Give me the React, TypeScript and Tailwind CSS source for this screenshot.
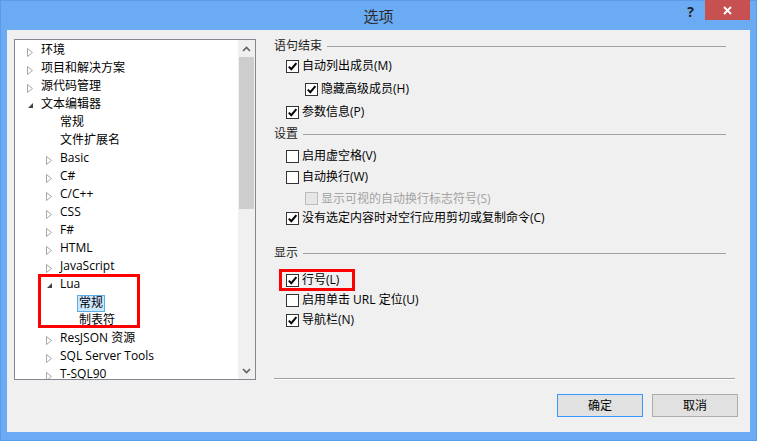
import React from 'react';

interface TreeRow {
  label: string;
  level: 0 | 1 | 2;
  arrow?: 'closed' | 'open';
  selected?: boolean;
}

interface Option {
  label: string;
  checked?: boolean;
  disabled?: boolean;
  indent?: boolean;
}

const levelPad = { 0: 'pl-[12px]', 1: 'pl-[31px]', 2: 'pl-[50px]' };

const topRows: TreeRow[] = [
  { label: '环境', level: 0, arrow: 'closed' },
  { label: '项目和解决方案', level: 0, arrow: 'closed' },
  { label: '源代码管理', level: 0, arrow: 'closed' },
  { label: '文本编辑器', level: 0, arrow: 'open' },
  { label: '常规', level: 1 },
  { label: '文件扩展名', level: 1 },
  { label: 'Basic', level: 1, arrow: 'closed' },
  { label: 'C#', level: 1, arrow: 'closed' },
  { label: 'C/C++', level: 1, arrow: 'closed' },
  { label: 'CSS', level: 1, arrow: 'closed' },
  { label: 'F#', level: 1, arrow: 'closed' },
  { label: 'HTML', level: 1, arrow: 'closed' },
  { label: 'JavaScript', level: 1, arrow: 'closed' },
];

const luaRows: TreeRow[] = [
  { label: 'Lua', level: 1, arrow: 'open' },
  { label: '常规', level: 2, selected: true },
  { label: '制表符', level: 2 },
];

const bottomRows: TreeRow[] = [
  { label: 'ResJSON 资源', level: 1, arrow: 'closed' },
  { label: 'SQL Server Tools', level: 1, arrow: 'closed' },
  { label: 'T-SQL90', level: 1, arrow: 'closed' },
];

const Row: React.FC<{ row: TreeRow }> = ({ row }) => (
  <div className={`flex h-[18px] shrink-0 items-center ${levelPad[row.level]}`}>
    <span className="flex w-[14px] shrink-0 items-center pt-[4px]">
      {row.arrow === 'closed' && (
        <svg width="6" height="9" viewBox="0 0 6 9">
          <polygon points="0.5,0.5 5.5,4.5 0.5,8.5" fill="#fff" stroke="#a6a6a6" strokeWidth="1" />
        </svg>
      )}
      {row.arrow === 'open' && (
        <svg width="6" height="6" viewBox="0 0 6 6" className="ml-[1px]">
          <polygon points="5,0 5,5 0,5" fill="#404040" />
        </svg>
      )}
    </span>
    {row.selected ? (
      <span className="-ml-[2px] mt-[2px] flex h-[17px] items-center border border-[#5aaee6] bg-[#cce8ff] px-[1px]">
        {row.label}
      </span>
    ) : (
      <span className="whitespace-nowrap">{row.label}</span>
    )}
  </div>
);

const Box: React.FC<{ checked?: boolean; disabled?: boolean }> = ({ checked, disabled }) => (
  <span
    className={`flex h-[13px] w-[13px] shrink-0 items-center justify-center border ${
      disabled ? 'border-[#bcbcbc] bg-[#e6e6e6]' : 'border-[#333333] bg-white'
    }`}
  >
    {checked && (
      <svg width="11" height="11" viewBox="0 0 11 11">
        <path d="M1.8 5.6 L4.3 8.2 L9.4 2.2" fill="none" stroke="#000" strokeWidth="2" />
      </svg>
    )}
  </span>
);

const Check: React.FC<{ opt: Option; className: string }> = ({ opt, className }) => (
  <div className={`flex items-center gap-[3px] ${opt.indent ? 'pl-[31px]' : 'pl-[12px]'} ${className}`}>
    <Box checked={opt.checked} disabled={opt.disabled} />
    <span className={`whitespace-nowrap ${opt.disabled ? 'text-[#a3a3a3]' : 'text-black'}`}>{opt.label}</span>
  </div>
);

const Header: React.FC<{ title: string; className: string }> = ({ title, className }) => (
  <div className={`flex items-center gap-[5px] text-[#1e1e1e] ${className}`}>
    <span>{title}</span>
    <div className="h-px flex-1 bg-[#a0a0a0]" />
  </div>
);

const App: React.FC = () => {
  return (
    <div className="flex h-[441px] w-[757px] flex-col border border-[#5b9ae6] bg-[#6aabf4] font-['Open_Sans','Noto_Sans_CJK_SC',sans-serif] text-[12px] select-none">
      <div className="grid h-[29px] shrink-0 grid-cols-[1fr_auto_1fr]">
        <div />
        <div className="pt-[6px] text-[15px] leading-[18px] text-[#2a2a2a]">选项</div>
        <div className="flex items-start justify-end">
          <span className="mr-[11px] mt-[3px] text-[14px] font-bold leading-[16px] text-[#222]">?</span>
          <div className="-mt-px mr-[6px] flex h-[20px] w-[45px] items-center justify-center bg-[#c75050]">
            <svg width="9" height="9" viewBox="0 0 9 9">
              <path d="M1 1 L8 8 M8 1 L1 8" stroke="#fff" strokeWidth="1.8" />
            </svg>
          </div>
        </div>
      </div>

      <div className="mx-[6px] mb-[8px] flex flex-1 bg-[#f0f0f0]">
        {/* tree */}
        <div className="ml-[7px] mt-[9px] flex h-[341px] w-[242px] shrink-0 border border-[#828790] bg-white">
          <div className="flex flex-1 flex-col overflow-hidden pt-[1px] leading-[18px] text-black">
            {topRows.map((r, i) => (
              <Row key={i} row={r} />
            ))}
            <div className="relative">
              {luaRows.map((r, i) => (
                <Row key={i} row={r} />
              ))}
              <div className="absolute left-[23px] -top-[1px] h-[54px] w-[102px] border-[3px] border-[#ff0000]" />
            </div>
            {bottomRows.map((r, i) => (
              <Row key={i} row={r} />
            ))}
          </div>
          <div className="flex w-[17px] shrink-0 flex-col bg-[#f0f0f0]">
            <div className="flex h-[17px] items-center justify-center">
              <svg width="9" height="6" viewBox="0 0 9 6">
                <path d="M1 5 L4.5 1.5 L8 5" fill="none" stroke="#606060" strokeWidth="1.6" />
              </svg>
            </div>
            <div className="mx-[1px] h-[152px] bg-[#cdcdcd]" />
            <div className="flex-1" />
            <div className="flex h-[17px] items-center justify-center">
              <svg width="9" height="6" viewBox="0 0 9 6">
                <path d="M1 1 L4.5 4.5 L8 1" fill="none" stroke="#606060" strokeWidth="1.6" />
              </svg>
            </div>
          </div>
        </div>

        {/* options */}
        <div className="ml-[18px] flex flex-1 flex-col pr-[12px] pt-[6px]">
          <div className="mr-[12px] flex flex-col">
            <Header title="语句结束" className="h-[20px]" />
            <Check opt={{ label: '自动列出成员(M)', checked: true }} className="h-[20px]" />
            <Check opt={{ label: '隐藏高级成员(H)', checked: true, indent: true }} className="h-[26px]" />
            <Check opt={{ label: '参数信息(P)', checked: true }} className="h-[20px]" />
            <Header title="设置" className="h-[24px]" />
            <Check opt={{ label: '启用虚空格(V)' }} className="h-[20px]" />
            <Check opt={{ label: '自动换行(W)' }} className="h-[22px]" />
            <Check opt={{ label: '显示可视的自动换行标志符号(S)', disabled: true, indent: true }} className="h-[21px]" />
            <Check opt={{ label: '没有选定内容时对空行应用剪切或复制命令(C)', checked: true }} className="h-[18px]" />
            <Header title="显示" className="mt-[17px] h-[18px]" />
            <div className="relative mt-[8px]">
              <Check opt={{ label: '行号(L)', checked: true }} className="h-[20px]" />
              <div className="absolute -top-[1px] left-[5px] h-[22px] w-[76px] border-[3px] border-[#ff0000]" />
            </div>
            <Check opt={{ label: '启用单击 URL 定位(U)' }} className="h-[20px]" />
            <Check opt={{ label: '导航栏(N)', checked: true }} className="h-[20px]" />
          </div>
          <div className="flex-1" />
          <div className="mr-[3px] h-[2px] border-t border-b border-t-[#a0a0a0] border-b-white" />
          <div className="mb-[15px] mt-[14px] flex justify-end gap-[9px]">
            <button className="flex h-[23px] w-[86px] items-center justify-center border border-[#3399ff] bg-[#e1e1e1] text-black">
              确定
            </button>
            <button className="flex h-[23px] w-[86px] items-center justify-center border border-[#adadad] bg-[#e1e1e1] text-black">
              取消
            </button>
          </div>
        </div>
      </div>
    </div>
  );
};

export default App;
